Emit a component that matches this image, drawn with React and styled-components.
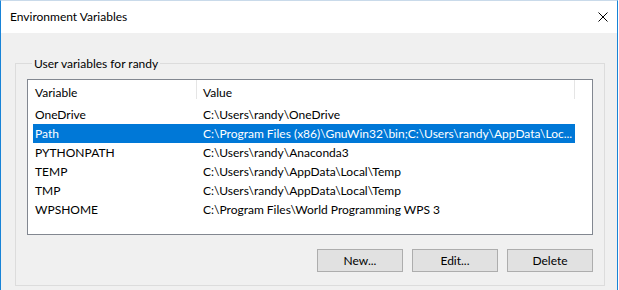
import React from "react";
import styled, { createGlobalStyle } from "styled-components";

const GlobalStyle = createGlobalStyle`
  html, body {
    margin: 0;
    padding: 0;
    background: #ffffff;
  }
  body {
    font-family: "Lato", "Noto Sans", sans-serif;
    font-size: 12px;
    color: #000;
  }
`;

const rows = [
  { name: "OneDrive", value: "C:\\Users\\randy\\OneDrive" },
  {
    name: "Path",
    value: "C:\\Program Files (x86)\\GnuWin32\\bin;C:\\Users\\randy\\AppData\\Loc...",
    selected: true,
  },
  { name: "PYTHONPATH", value: "C:\\Users\\randy\\Anaconda3" },
  { name: "TEMP", value: "C:\\Users\\randy\\AppData\\Local\\Temp" },
  { name: "TMP", value: "C:\\Users\\randy\\AppData\\Local\\Temp" },
  { name: "WPSHOME", value: "C:\\Program Files\\World Programming WPS 3" },
];

const Window = styled.div`
  width: 616px;
  height: 289px;
  border: 1px solid #1883d7;
  border-top-color: #c9daea;
  border-bottom: none;
  background: #f0f0f0;
  display: flex;
  flex-direction: column;
  overflow: hidden;
`;

const TitleBar = styled.div`
  height: 31px;
  flex-shrink: 0;
  background: #ffffff;
  display: flex;
  align-items: center;
  justify-content: space-between;
  padding: 0 9px 1px 9px;
`;

const Title = styled.span`
  font-size: 12px;
  color: #000;
`;

const CloseIcon = styled.svg`
  width: 10px;
  height: 10px;
  margin-top: 1px;
`;

const Body = styled.div`
  padding: 23px 12px 0 14px;
`;

const Group = styled.fieldset`
  margin: 0;
  padding: 8px 11px 13px 11px;
  border: 1px solid #dcdcdc;
  min-width: 0;
`;

const Legend = styled.legend`
  padding: 0 2px;
  margin-left: 5px;
  line-height: 15px;
`;

const ListBox = styled.div`
  height: 154px;
  border: 1px solid #828790;
  background: #ffffff;
  padding-left: 5px;
`;

const HeaderRow = styled.div`
  display: flex;
  height: 25px;
`;

const HeaderCell = styled.div`
  width: ${(p) => p.$w}px;
  height: 19px;
  border-right: 1px solid #e5e5e5;
  padding-left: ${(p) => p.$pad}px;
  padding-top: 6px;
  box-sizing: border-box;
  line-height: 13px;
`;

const Row = styled.div`
  display: grid;
  grid-template-columns: 164px 378px;
  width: 542px;
  height: 19px;
  align-items: center;
  background: ${(p) => (p.$selected ? "#0078d7" : "transparent")};
  color: ${(p) => (p.$selected ? "#ffffff" : "#000000")};
`;

const Cell = styled.div`
  padding-left: ${(p) => p.$pad}px;
  white-space: nowrap;
  overflow: hidden;
`;

const ButtonBar = styled.div`
  display: flex;
  justify-content: flex-end;
  gap: 9px;
  margin-top: 14px;
`;

const Button = styled.button`
  width: 86px;
  height: 23px;
  background: #e1e1e1;
  border: 1px solid #adadad;
  font-family: inherit;
  font-size: 12px;
  color: #000;
  padding: 0;
`;

export default function App() {
  return (
    <>
      <GlobalStyle />
      <Window>
        <TitleBar>
          <Title>Environment Variables</Title>
          <CloseIcon viewBox="0 0 10 10">
            <path d="M0.5 0.5 L9.5 9.5 M9.5 0.5 L0.5 9.5" stroke="#000" strokeWidth="1" fill="none" />
          </CloseIcon>
        </TitleBar>
        <Body>
          <Group>
            <Legend>User variables for randy</Legend>
            <ListBox>
              <HeaderRow>
                <HeaderCell $w={164} $pad={2}>Variable</HeaderCell>
                <HeaderCell $w={378} $pad={6}>Value</HeaderCell>
              </HeaderRow>
              {rows.map((r) => (
                <Row key={r.name} $selected={r.selected}>
                  <Cell $pad={2}>{r.name}</Cell>
                  <Cell $pad={6}>{r.value}</Cell>
                </Row>
              ))}
            </ListBox>
            <ButtonBar>
              <Button>New...</Button>
              <Button>Edit...</Button>
              <Button>Delete</Button>
            </ButtonBar>
          </Group>
        </Body>
      </Window>
    </>
  );
}
